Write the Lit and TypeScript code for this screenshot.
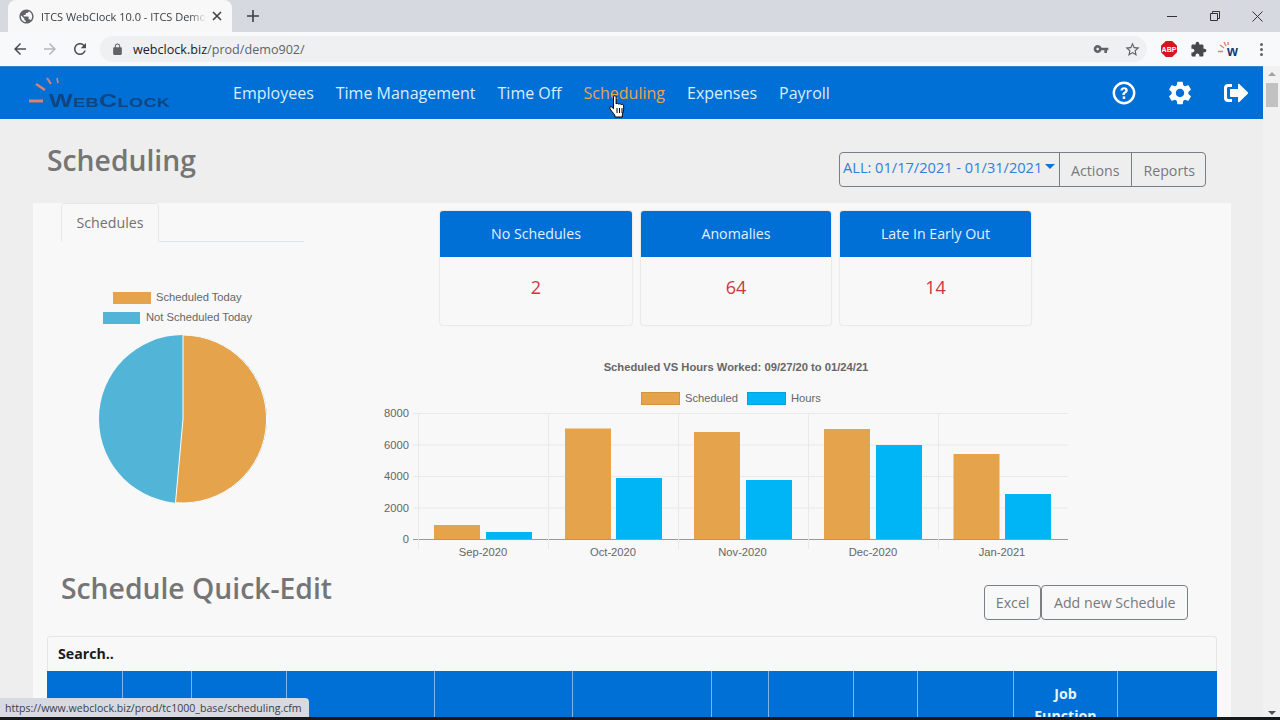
import { LitElement, html, css, svg } from "lit";
import { customElement } from "lit/decorators.js";

const P = {
  back: "M20 11H7.83l5.59-5.59L12 4l-8 8 8 8 1.41-1.41L7.83 13H20v-2z",
  fwd: "M12 4l-1.41 1.41L16.17 11H4v2h12.17l-5.58 5.59L12 20l8-8z",
  reload: "M17.65 6.35C16.2 4.9 14.21 4 12 4c-4.42 0-7.99 3.58-7.99 8s3.57 8 7.99 8c3.73 0 6.84-2.55 7.73-6h-2.08c-.82 2.33-3.04 4-5.65 4-3.31 0-6-2.69-6-6s2.69-6 6-6c1.66 0 3.14.69 4.22 1.78L13 11h7V4l-2.35 2.35z",
  lock: "M18 8h-1V6c0-2.76-2.24-5-5-5S7 3.24 7 6v2H6c-1.1 0-2 .9-2 2v10c0 1.1.9 2 2 2h12c1.1 0 2-.9 2-2V10c0-1.1-.9-2-2-2zm-2.9 0H8.9V6c0-1.71 1.39-3.1 3.1-3.1 1.71 0 3.1 1.39 3.1 3.1v2z",
  star: "M22 9.24l-7.19-.62L12 2 9.19 8.63 2 9.24l5.46 4.73L5.82 21 12 17.27 18.18 21l-1.63-7.03L22 9.24zM12 15.4l-3.76 2.27 1-4.28-3.32-2.88 4.38-.38L12 6.1l1.71 4.04 4.38.38-3.32 2.88 1 4.28L12 15.4z",
  key: "M12.65 10C11.83 7.67 9.61 6 7 6c-3.31 0-6 2.69-6 6s2.69 6 6 6c2.61 0 4.83-1.67 5.65-4H17v4h4v-4h2v-4H12.65zM7 14c-1.1 0-2-.9-2-2s.9-2 2-2 2 .9 2 2-.9 2-2 2z",
  globe: "M12 2C6.48 2 2 6.48 2 12s4.48 10 10 10 10-4.48 10-10S17.52 2 12 2zm-1 17.93c-3.95-.49-7-3.85-7-7.93 0-.62.08-1.21.21-1.79L9 15v1c0 1.1.9 2 2 2v1.93zm6.9-2.54c-.26-.81-1-1.39-1.9-1.39h-1v-3c0-.55-.45-1-1-1H8v-2h2c.55 0 1-.45 1-1V7h2c1.1 0 2-.9 2-2v-.41c2.93 1.19 5 4.06 5 7.41 0 2.08-.8 3.97-2.1 5.39z",
  ext: "M20.5 11H19V7c0-1.1-.9-2-2-2h-4V3.5C13 2.12 11.88 1 10.5 1S8 2.12 8 3.5V5H4c-1.1 0-1.99.9-1.99 2v3.8H3.5c1.49 0 2.7 1.21 2.7 2.7s-1.21 2.7-2.7 2.7H2V20c0 1.1.9 2 2 2h3.8v-1.5c0-1.49 1.21-2.7 2.7-2.7 1.49 0 2.7 1.21 2.7 2.7V22H17c1.1 0 2-.9 2-2v-4h1.5c1.38 0 2.5-1.12 2.5-2.5S21.88 11 20.5 11z",
  gear: "M19.14 12.94c.04-.3.06-.61.06-.94 0-.32-.02-.64-.07-.94l2.03-1.58c.18-.14.23-.41.12-.61l-1.92-3.32c-.12-.22-.37-.29-.59-.22l-2.39.96c-.5-.38-1.03-.7-1.62-.94l-.36-2.54c-.04-.24-.24-.41-.48-.41h-3.84c-.24 0-.43.17-.47.41l-.36 2.54c-.59.24-1.13.57-1.62.94l-2.39-.96c-.22-.08-.47 0-.59.22L2.74 8.87c-.12.21-.08.47.12.61l2.03 1.58c-.05.3-.09.63-.09.94s.02.64.07.94l-2.03 1.58c-.18.14-.23.41-.12.61l1.92 3.32c.12.22.37.29.59.22l2.39-.96c.5.38 1.03.7 1.62.94l.36 2.54c.05.24.24.41.48.41h3.84c.24 0 .44-.17.47-.41l.36-2.54c.59-.24 1.13-.56 1.62-.94l2.39.96c.22.08.47 0 .59-.22l1.92-3.32c.12-.22.07-.47-.12-.61l-2.01-1.58zM12 15.6c-1.98 0-3.6-1.62-3.6-3.6s1.62-3.6 3.6-3.6 3.6 1.62 3.6 3.6-1.62 3.6-3.6 3.6z",
};

const icon = (d: string, size: number, color: string) => html`<svg width=${size} height=${size} viewBox="0 0 24 24" style="fill:${color};display:block;flex:none"><path d=${d}></path></svg>`;

const ORANGE = "#e5a44b";
const SKY = "#00b5f5";
const TEAL = "#52b4d6";

const bars: [number, number, number, string][] = [
  [434, 46, 525, ORANGE], [486, 46, 532, SKY],
  [565, 46, 428.5, ORANGE], [616, 46, 478, SKY],
  [694, 46, 432, ORANGE], [746, 46, 480, SKY],
  [824, 46, 429, ORANGE], [876, 46, 445, SKY],
  [953.5, 46, 454, ORANGE], [1005, 46, 494, SKY],
];
const yTicks: [string, number][] = [["8000", 413.5], ["6000", 445], ["4000", 476.5], ["2000", 508], ["0", 539.5]];
const vLines = [418.5, 548.5, 678.5, 808.5, 938.5];
const months: [string, number][] = [["Sep-2020", 483], ["Oct-2020", 613], ["Nov-2020", 742.5], ["Dec-2020", 873], ["Jan-2021", 1002]];

const barChart = svg`
  <text x="736" y="371" text-anchor="middle" class="ct">Scheduled VS Hours Worked: 09/27/20 to 01/24/21</text>
  <rect x="641.5" y="392.5" width="38" height="12" fill=${ORANGE} stroke="#d0953f"></rect>
  <text x="685" y="402" class="cl">Scheduled</text>
  <rect x="747.5" y="392.5" width="38" height="12" fill=${SKY} stroke="#00a3dc"></rect>
  <text x="791" y="402" class="cl">Hours</text>
  ${yTicks.map(([, y], i) => svg`<line x1="413" x2="1068" y1=${y} y2=${y} stroke=${i === 4 ? "#9a9a9a" : "#e9e9e9"}></line>`)}
  ${vLines.map((x) => svg`<line x1=${x} x2=${x} y1="413" y2="549" stroke="#e9e9e9"></line>`)}
  ${bars.map(([x, w, top, c]) => svg`<rect x=${x} y=${top} width=${w} height=${539 - top} fill=${c}></rect>`)}
  ${yTicks.map(([t, y]) => svg`<text x="409" y=${y + 3.5} text-anchor="end" class="cl">${t}</text>`)}
  ${months.map(([t, x]) => svg`<text x=${x} y="556" text-anchor="middle" class="cl">${t}</text>`)}
`;

@customElement("app-root")
export class AppRoot extends LitElement {
  static styles = css`
    :host { display: block; width: 1280px; height: 720px; overflow: hidden; position: relative; font-family: "Open Sans", "Noto Sans", sans-serif; background: #eeeeee; }
    .root { display: flex; flex-direction: column; height: 720px; }

    .tabstrip { height: 32px; background: #d6d9e0; display: flex; align-items: stretch; flex: none; }
    .tab { margin-left: 8px; width: 224px; background: #f8f8f9; border-radius: 8px 8px 0 0; display: flex; align-items: center; padding: 0 10px 0 10px; box-sizing: border-box; gap: 6px; }
    .tab-title { font-size: 11px; color: #3c4043; white-space: nowrap; overflow: hidden; width: 165px; flex: none; -webkit-mask-image: linear-gradient(to right, #000 90%, transparent); mask-image: linear-gradient(to right, #000 90%, transparent); }
    .plus { margin-left: 15px; align-self: center; }
    .winctl { margin-left: auto; display: flex; align-items: center; padding-right: 1px; }
    .winctl svg { display: block; }
    .winbtn { width: 43px; display: flex; justify-content: center; }

    .toolbar { height: 34px; background: #f8f9fa; display: flex; align-items: center; flex: none; padding-left: 11px; box-sizing: border-box; }
    .tb-gap { width: 12px; flex: none; }
    .pill { margin-left: 11px; width: 1047px; height: 26px; border-radius: 13px; background: #eff0f2; display: flex; align-items: center; padding: 0 6px 0 11px; box-sizing: border-box; flex: none; }
    .url { margin-left: 9px; font-size: 12.6px; color: #5f6368; }
    .url b { font-weight: 400; color: #202124; }
    .pill-r { margin-left: auto; display: flex; gap: 15px; align-items: center; }
    .exts { display: flex; align-items: center; margin-left: 14px; }
    .abp { width: 16px; height: 16px; background: #d5161f; color: #fff; font: 700 7px "Liberation Sans", sans-serif; display: flex; align-items: center; justify-content: center; flex: none; clip-path: polygon(30% 0, 70% 0, 100% 30%, 100% 70%, 70% 100%, 30% 100%, 0 70%, 0 30%); }
    .ext-gap { width: 13px; flex: none; }
    .wext { position: relative; width: 24px; height: 18px; margin-left: 11px; flex: none; }
    .wext span { position: absolute; left: 9px; top: 3px; font: 700 14px "Liberation Sans", sans-serif; color: #123d73; }
    .wext svg { position: absolute; left: 0; top: 0; }
    .dots { margin-left: 18px; display: flex; flex-direction: column; gap: 2px; }
    .dots i { width: 3px; height: 3px; border-radius: 50%; background: #5f6368; display: block; }

    .main { flex: 1; display: flex; min-height: 0; position: relative; }
    .page { flex: 1; min-width: 0; display: flex; flex-direction: column; background: #eeeeee; overflow: hidden; }
    .scrollbar { width: 17px; flex: none; background: #f1f1f1; position: relative; display: flex; flex-direction: column; align-items: center; justify-content: space-between; padding: 6px 0 5px; box-sizing: border-box; }
    .scrollbar .thumb { position: absolute; left: 3px; top: 17px; width: 12px; height: 24px; background: #c1c1c1; }
    .arrow-up { width: 0; height: 0; border: 4px solid transparent; border-top: 0; border-bottom: 4px solid #a3a3a3; }
    .arrow-dn { width: 0; height: 0; border: 4px solid transparent; border-bottom: 0; border-top: 4px solid #505050; }

    .nav { height: 53px; flex: none; background: #006fd6; border-top: 1px solid #2f86d6; box-sizing: border-box; display: flex; align-items: center; padding-left: 28px; }
    .logo { position: relative; width: 143px; height: 34px; flex: none; margin-right: 62px; }
    .logo svg { position: absolute; left: 0; top: 0; }
    .logo span { position: absolute; left: 21px; top: 14px; font: 700 18px/22px "Liberation Sans", sans-serif; font-variant: small-caps; color: #0f4580; letter-spacing: 0.3px; white-space: nowrap; transform-origin: left center; transform: scaleX(1.39); }
    .links { display: flex; gap: 22px; font-size: 16px; color: #d9eeff; }
    .links .on { color: #e9a64c; }
    .nav-r { margin-left: auto; display: flex; align-items: center; gap: 30px; padding-right: 14px; }

    .head { height: 84px; flex: none; display: flex; justify-content: space-between; padding: 21px 57px 0 47px; box-sizing: border-box; }
    .head h1 { margin: 0; font-size: 28.3px; font-weight: 600; color: #757575; line-height: 40px; }
    .btngroup { display: flex; height: 35px; margin-top: 12px; border: 1px solid #7a7f85; border-radius: 4px; box-sizing: border-box; }
    .btngroup div { display: flex; align-items: center; font-size: 14.2px; color: #75797e; padding: 1px 11px 0; border-left: 1px solid #7a7f85; }
    .btngroup .act { padding-right: 12px; }
    .btngroup .rep { padding-right: 10px; }
    .btngroup .range { border-left: 0; color: #2f7fdc; padding: 4px 0 0 3px; width: 219px; box-sizing: border-box; font-size: 14.6px; align-items: flex-start; white-space: nowrap; }
    .caret { width: 0; height: 0; border: 5px solid transparent; border-bottom: 0; border-top: 5px solid #0a74da; margin: 7px 0 0 3px; flex: none; }

    .panel { flex: 1; margin: 0 32px 0 33px; background: #f8f8f8; display: flex; flex-direction: column; min-height: 0; }
    .top { display: flex; height: 367px; flex: none; }
    .left { width: 340px; flex: none; display: flex; flex-direction: column; }
    .tabs { margin-left: 28px; width: 243px; height: 39px; flex: none; border-bottom: 1px solid #dfe3ee; box-sizing: border-box; }
    .tabs div { width: 98px; height: 39px; box-sizing: border-box; border: 1px solid #e6e8ec; border-bottom: 1px solid #f8f8f8; border-radius: 4px 4px 0 0; font-size: 14.2px; color: #6d7177; display: flex; align-items: center; justify-content: center; padding-bottom: 1px; }
    .pie { display: block; margin-top: 38px; }
    .right { flex: 1; min-width: 0; display: flex; flex-direction: column; padding: 8px 0 0 67px; }
    .cards { display: grid; grid-template-columns: 192px 190px 191px; gap: 9px; flex: none; }
    .card { height: 114px; background: #f8f8f8; border-radius: 3px; box-shadow: 0 0 2px rgba(0,0,0,.2); overflow: hidden; display: flex; flex-direction: column; }
    .card .h { height: 46px; background: #006fd6; color: #e2f1ff; font-size: 14.2px; display: flex; align-items: center; justify-content: center; flex: none; padding-bottom: 2px; box-sizing: border-box; }
    .card .v { flex: 1; display: flex; align-items: center; justify-content: center; color: #cf3440; font-size: 18px; font-weight: 500; padding-bottom: 8px; }
    .chart { display: block; margin: 25px 0 0 -67px; }
    .ct { font: 700 11.2px "Liberation Sans", sans-serif; fill: #666; }
    .cl { font: 11.2px "Liberation Sans", sans-serif; fill: #666; }

    .qhead { height: 66px; flex: none; display: flex; justify-content: space-between; padding: 0 43px 0 28px; box-sizing: border-box; }
    .qhead h2 { margin: -1px 0 0; font-size: 28.3px; font-weight: 600; color: #757575; line-height: 38px; }
    .qbtns { display: flex; margin-top: 15px; height: 35px; }
    .qbtns div { border: 1px solid #7a7f85; border-radius: 4px; box-sizing: border-box; font-size: 14.2px; color: #75797e; display: flex; align-items: center; padding: 0 11px; }
    .qbtns div:last-child { padding: 0 11.5px; }
    .search { margin: 0 14px; height: 35px; box-sizing: border-box; flex: none; border: 1px solid #e4e6ea; border-bottom: 0; border-radius: 3px 3px 0 0; font-size: 14.2px; font-weight: 700; color: #1a1a1a; display: flex; align-items: center; padding: 0 0 1px 10px; }
    .thead { margin: 0 14px; flex: none; height: 80px; display: grid; grid-template-columns: 75px 69px 95px 148px 138px 139px 57px 85px 64px 96px 104px 1fr; background: #006fd6; }
    .thead div { border-left: 1px solid #7fb5e8; color: #e8f3ff; font-size: 14.2px; font-weight: 700; text-align: center; line-height: 22px; padding: 12px 12px 0; min-width: 0; }
    .thead div:first-child { border-left: 0; }

    .status { position: absolute; left: 0; bottom: 3px; height: 19px; width: 309px; box-sizing: border-box; background: #d7dae1; border-radius: 0 4px 0 0; font-size: 10.6px; color: #3c4043; display: flex; align-items: center; padding-left: 5px; white-space: nowrap; }
    .blackbar { position: absolute; left: 0; right: 0; bottom: 0; height: 3px; background: #16181b; }
    .cursor { position: absolute; left: 609px; top: 29px; }
  `;

  render() {
    const head = ["", "", "", "", "", "", "", "", "", "", "Job Function", ""];
    return html`
      <div class="root">
        <div class="tabstrip">
          <div class="tab">
            ${icon(P.globe, 17, "#5f6368")}
            <span class="tab-title">ITCS WebClock 10.0 - ITCS Demo 902</span>
            <svg width="10" height="10" viewBox="0 0 10 10" style="stroke:#3c4043;stroke-width:1.6;flex:none"><path d="M1 1l8 8M9 1l-8 8"></path></svg>
          </div>
          <svg class="plus" width="12" height="12" viewBox="0 0 12 12" style="stroke:#3c4043;stroke-width:1.6;flex:none"><path d="M6 0v12M0 6h12"></path></svg>
          <div class="winctl">
            <div class="winbtn"><svg width="12" height="10" viewBox="0 0 12 10" style="stroke:#333;fill:none"><path d="M1 5.500h10"></path></svg></div>
            <div class="winbtn"><svg width="10" height="10" viewBox="0 0 10 10" style="stroke:#333;fill:none"><path d="M.5 2.500h7v7h-7zM2.500 2.500v-2h7v7h-2"></path></svg></div>
            <div class="winbtn"><svg width="11" height="11" viewBox="0 0 11 11" style="stroke:#333;fill:none"><path d="M.5.5l10 10M10.500.5l-10 10"></path></svg></div>
          </div>
        </div>
        <div class="toolbar">
          ${icon(P.back, 18, "#4a4d51")}
          <div class="tb-gap"></div>
          ${icon(P.fwd, 18, "#b4b7bb")}
          <div class="tb-gap"></div>
          ${icon(P.reload, 18, "#4a4d51")}
          <div class="pill">
            ${icon(P.lock, 13, "#5f6368")}
            <span class="url"><b>webclock.biz</b>/prod/demo902/</span>
            <div class="pill-r">
              ${icon(P.key, 16, "#5f6368")}
              ${icon(P.star, 17, "#5f6368")}
            </div>
          </div>
          <div class="exts">
            <div class="abp">ABP</div>
            <div class="ext-gap"></div>
            ${icon(P.ext, 17, "#45484c")}
            <div class="wext">
              <svg width="14" height="18" viewBox="0 0 14 18" style="stroke:#e6806a;stroke-width:1.4;fill:none"><path d="M0 11.500h5M2 5l4 3M6 2l2 4M10 2l.3 3"></path></svg>
              <span>w</span>
            </div>
            <div class="dots"><i></i><i></i><i></i></div>
          </div>
        </div>
        <div class="main">
          <div class="page">
            <div class="nav">
              <div class="logo">
                <svg width="60" height="34" viewBox="0 0 60 34" style="stroke:#dd8070;fill:none"><path d="M1 25h14" stroke-width="3"></path><path d="M8 8l9 6" stroke-width="2.500"></path><path d="M19 2l4 6" stroke-width="2"></path><path d="M29 2l1 5" stroke-width="1.600"></path></svg>
                <span>WebClock</span>
              </div>
              <div class="links">
                <span>Employees</span><span>Time Management</span><span>Time Off</span><span class="on">Scheduling</span><span>Expenses</span><span>Payroll</span>
              </div>
              <div class="nav-r">
                <svg width="24" height="24" viewBox="0 0 24 24" style="display:block"><circle cx="12" cy="12" r="10.200" fill="none" stroke="#fff" stroke-width="2.400"></circle><path d="M8.400 9.600c0-2.100 1.500-3.400 3.700-3.400 2.100 0 3.700 1.200 3.700 3.100 0 1.600-1 2.300-2 3-.8.500-1.100.9-1.100 1.700h-2.400c0-1.600.5-2.400 1.600-3.100.9-.6 1.400-.9 1.400-1.500 0-.7-.6-1.100-1.300-1.100-.9 0-1.300.5-1.400 1.300z" fill="#fff"></path><rect x="10.700" y="15.400" width="2.500" height="2.500" fill="#fff"></rect></svg>
                ${icon(P.gear, 28, "#fff")}
                <svg width="26" height="20" viewBox="0 0 26 20" style="display:block;fill:#fff;margin-left:-1px"><path d="M9 1H5C2.500 1 1 2.500 1 5v10c0 2.500 1.500 4 4 4h4v-3H5.500C4.600 16 4 15.400 4 14.500v-9C4 4.600 4.600 4 5.500 4H9z"></path><path d="M15 1.500c0-.8.800-1 1.300-.5l8.500 8.200c.5.500.5 1.100 0 1.600L16.300 19c-.5.500-1.300.3-1.300-.5v-4.500H8c-.6 0-1-.4-1-1V7c0-.6.400-1 1-1h7z"></path></svg>
              </div>
            </div>
            <div class="head">
              <h1>Scheduling</h1>
              <div class="btngroup">
                <div class="range">ALL: 01/17/2021 - 01/31/2021<span class="caret"></span></div>
                <div class="act">Actions</div>
                <div class="rep">Reports</div>
              </div>
            </div>
            <div class="panel">
              <div class="top">
                <div class="left">
                  <div class="tabs"><div>Schedules</div></div>
                  <svg class="pie" width="300" height="230" viewBox="33 280 300 230">
                    <rect x="113" y="292" width="38" height="12" fill=${ORANGE}></rect>
                    <text x="156" y="301" class="cl">Scheduled Today</text>
                    <rect x="103" y="312" width="37" height="12" fill=${TEAL}></rect>
                    <text x="146" y="321" class="cl">Not Scheduled Today</text>
                    <circle cx="183" cy="419" r="84" fill=${TEAL}></circle>
                    <path d="M183 419L183 335A84 84 0 1 1 175.500 502.700Z" fill=${ORANGE} stroke="#fff" stroke-width="1"></path>
                  </svg>
                </div>
                <div class="right">
                  <div class="cards">
                    <div class="card"><div class="h">No Schedules</div><div class="v">2</div></div>
                    <div class="card"><div class="h">Anomalies</div><div class="v">64</div></div>
                    <div class="card"><div class="h">Late In Early Out</div><div class="v">14</div></div>
                  </div>
                  <svg class="chart" width="727" height="220" viewBox="373 350 727 220">${barChart}</svg>
                </div>
              </div>
              <div class="qhead">
                <h2>Schedule Quick-Edit</h2>
                <div class="qbtns"><div>Excel</div><div>Add new Schedule</div></div>
              </div>
              <div class="search">Search..</div>
              <div class="thead">${head.map((h) => html`<div>${h}</div>`)}</div>
            </div>
          </div>
          <div class="scrollbar"><span class="arrow-up"></span><span class="thumb"></span><span class="arrow-dn"></span></div>
          <div class="cursor">
            <svg width="18" height="24" viewBox="0 0 18 24"><path d="M4.500 1.800c0-1.400 2.600-1.400 2.600 0V9c.5-.9 2.300-.9 2.600.2.600-.7 2.200-.6 2.500.5.700-.6 2.300-.3 2.400 1 .2 2.700 0 5.300-.9 7.400-.4 1.100-.4 2.100-.4 3.900H6c0-1.600-.6-2.500-1.600-3.700C3.300 17 1.900 15.300 1 13.700.300 12.100 1.700 11 2.900 12.100L4.500 13.700z" fill="#fff" stroke="#000" stroke-width="1"></path><path d="M8 13v5M10.500 13v5M13 13v5" stroke="#000" stroke-width="1"></path></svg>
          </div>
          <div class="status">https://www.webclock.biz/prod/tc1000_base/scheduling.cfm</div>
          <div class="blackbar"></div>
        </div>
      </div>
    `;
  }
}
